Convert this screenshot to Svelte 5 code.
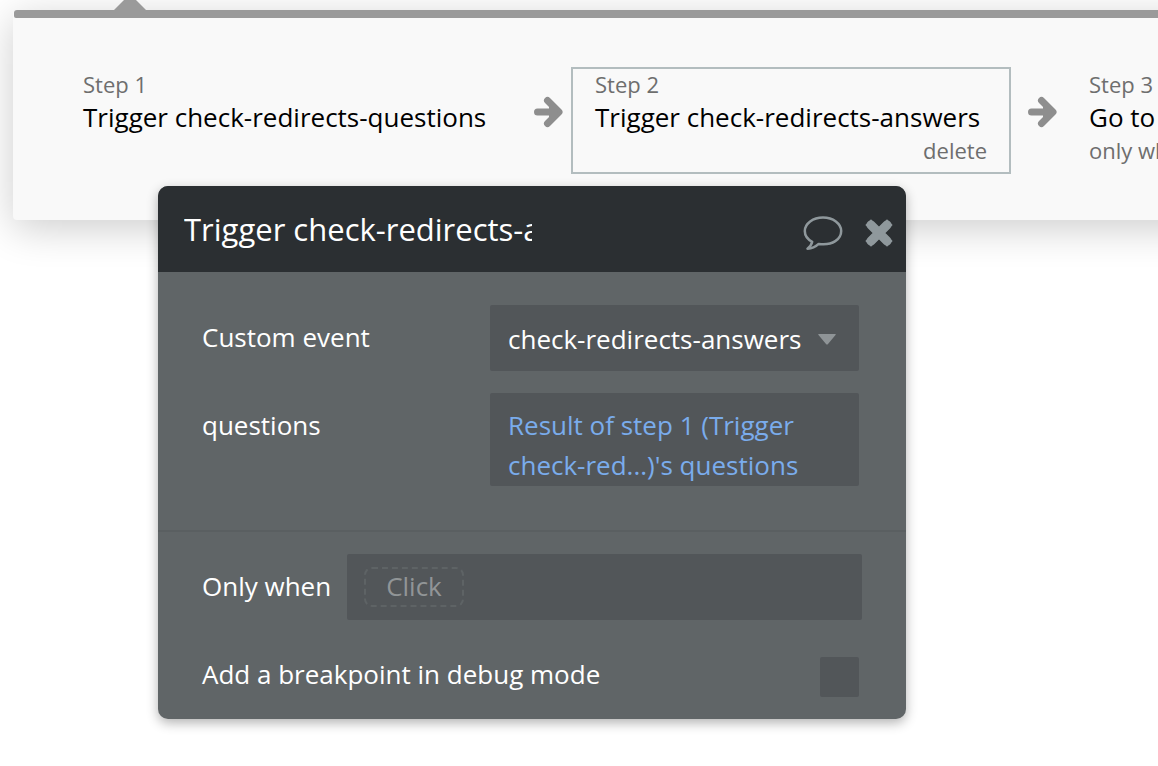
<script>
    let title = 'Trigger check-redirects-answers';
    let customEvent = 'check-redirects-answers';
    let breakpoint = false;

    const customEvents = ['check-redirects-answers', 'check-redirects-questions'];

    const steps = [
        { name: 'Trigger check-redirects-questions' },
        { name: 'Trigger check-redirects-answers', selected: true },
        { name: 'Go to page', condition: 'only when' }
    ];
</script>

<div class="page">
    <div class="workflow">
        <div class="pointer"></div>
        <div class="bar"></div>
        <div class="steps">
            {#each steps as step, i}
                {#if i > 0}
                    <svg class="arrow" width="29" height="32" viewBox="0 0 29 32">
                        <path d="M3.5 16H22M13.500 4.500L25 16L13.500 27.500" />
                        <path class="fill" d="M15 9L24 16L15 23Z" />
                    </svg>
                {/if}
                <div class="step" class:selected={step.selected}>
                    <span class="small">Step {i + 1}</span>
                    <span class="name">{step.name}</span>
                    {#if step.selected}
                        <button class="small delete">delete</button>
                    {/if}
                    {#if step.condition}
                        <span class="small">{step.condition}</span>
                    {/if}
                </div>
            {/each}
        </div>
    </div>

    <div class="editor">
        <div class="header">
            <input class="title" type="text" aria-label="Action name" bind:value={title} />
            <button class="icon" aria-label="Comment">
                <svg width="40" height="36" viewBox="0 0 40 36">
                    <path class="bubble" d="M20 2.500C10 2.500 1.800 8.500 1.800 16C1.800 20.500 4.500 24.300 9.200 26.800C8.600 29.800 7 31.800 4.500 33.700C9 33.500 12.700 31.700 15.700 28.900C30 30.800 38.200 24 38.200 16C38.200 8.500 30 2.500 20 2.500Z" />
                </svg>
            </button>
            <button class="icon" aria-label="Close">
                <svg width="28" height="28" viewBox="0 0 28 28">
                    <path class="cross" d="M6 6L22 22M22 6L6 22" />
                    <path class="corners" d="M6 6L22 22M22 6L6 22" />
                </svg>
            </button>
        </div>

        <div class="fields">
            <div class="row">
                <label for="custom-event">Custom event</label>
                <div class="dropdown">
                    <select id="custom-event" bind:value={customEvent}>
                        {#each customEvents as event}
                            <option value={event}>{event}</option>
                        {/each}
                    </select>
                    <svg class="caret" width="18" height="11" viewBox="0 0 18 11">
                        <path d="M1 0H17Q18.500 0 17.500 1L10 10Q9 11 8 10L0.500 1Q-0.500 0 1 0Z" />
                    </svg>
                </div>
            </div>
            <div class="row">
                <span class="label" id="questions">questions</span>
                <button class="expression" aria-labelledby="questions">Result of step 1 (Trigger check-red...)'s questions</button>
            </div>
        </div>

        <div class="options">
            <div class="row condition">
                <span class="label" id="only-when">Only when</span>
                <div class="composer">
                    <button class="click" aria-describedby="only-when">Click</button>
                </div>
            </div>
            <div class="row debug">
                <label for="breakpoint">Add a breakpoint in debug mode</label>
                <input id="breakpoint" type="checkbox" bind:checked={breakpoint} />
            </div>
        </div>
    </div>
</div>

<style>
    :global(body) {
        background: #fff;
    }
    .page {
        position: relative;
        min-height: 100vh;
        overflow: hidden;
        font-family: "Open Sans", "Noto Sans", sans-serif;
        font-size: 26px;
    }
    button, input, select {
        font-family: inherit;
        font-size: inherit;
        margin: 0;
        padding: 0;
        border: none;
        background: none;
        box-sizing: border-box;
    }
    button {
        cursor: pointer;
    }

    .workflow {
        position: relative;
        margin: 10px -60px 0 13px;
        background: #f9f9f9;
        border-radius: 4px;
        box-shadow: 0 8px 40px rgba(0, 0, 0, 0.2);
    }
    .pointer {
        position: absolute;
        left: 101px;
        top: -16px;
        border: 16px solid transparent;
        border-top-width: 0;
        border-bottom-color: #9a9a9a;
    }
    .bar {
        height: 8px;
        margin-left: 1px;
        background: #9a9a9a;
        border-radius: 3px 0 0 2px;
    }
    .steps {
        display: flex;
        align-items: flex-start;
        padding: 49px 0 46px 46px;
        overflow: hidden;
    }
    .step {
        display: flex;
        flex-direction: column;
        flex-shrink: 0;
        gap: 2px;
        min-width: 440px;
        min-height: 107px;
        box-sizing: border-box;
        padding: 0 22px;
        border: 2px solid transparent;
        line-height: 31px;
        white-space: nowrap;
        color: #000;
    }
    .step:first-child {
        min-width: 458px;
    }
    .step.selected {
        border-color: #b3bdbf;
    }
    .small {
        font-size: 22px;
        line-height: 31px;
        color: #6e6e6e;
    }
    .delete {
        align-self: flex-end;
    }
    .arrow {
        flex-shrink: 0;
        margin: 29px 8px 0 17px;
        fill: none;
        stroke: #8e8e8e;
        stroke-width: 7;
        stroke-linecap: round;
        stroke-linejoin: round;
    }
    .arrow .fill {
        fill: #8e8e8e;
        stroke: none;
    }

    .editor {
        position: absolute;
        left: 158px;
        top: 186px;
        width: 748px;
        border-radius: 10px;
        background: #606567;
        color: #fff;
        box-shadow: 0 4px 12px rgba(0, 0, 0, 0.3);
    }
    .header {
        display: flex;
        align-items: center;
        height: 86px;
        padding: 0 13px 0 26px;
        background: #2b2f32;
        border-radius: 10px 10px 0 0;
    }
    .title {
        width: 348px;
        height: 48px;
        margin-right: auto;
        font-size: 31px;
        color: #fff;
    }
    .icon {
        display: flex;
        margin: 8px 0 0 22px;
    }
    .bubble {
        fill: none;
        stroke: #8f989c;
        stroke-width: 2.5;
        stroke-linejoin: round;
    }
    .cross {
        stroke: #8f989c;
        stroke-width: 8;
        stroke-linecap: square;
    }
    .corners {
        stroke: #8f989c;
        stroke-width: 9;
        stroke-linecap: round;
    }

    .fields {
        display: flex;
        flex-direction: column;
        gap: 22px;
        padding: 33px 47px 44px 44px;
    }
    .row {
        display: flex;
        justify-content: space-between;
    }
    label, .label {
        line-height: 64px;
    }
    .dropdown {
        position: relative;
        width: 369px;
    }
    select {
        appearance: none;
        width: 100%;
        height: 66px;
        padding: 1px 50px 0 18px;
        background: #525659;
        border-radius: 2px;
        color: #fff;
    }
    .caret {
        position: absolute;
        right: 23px;
        top: 29px;
        fill: #8f9497;
        pointer-events: none;
    }
    .expression {
        width: 369px;
        padding: 12px 18px 1px;
        background: #525659;
        border-radius: 2px;
        color: #7aacec;
        line-height: 40px;
        text-align: left;
    }

    .options {
        padding: 22px 44px 22px;
        border-top: 2px solid #5a5f61;
    }
    .condition {
        gap: 16px;
    }
    .composer {
        flex: 1;
        display: flex;
        align-items: center;
        height: 66px;
        padding-left: 17px;
        background: #525659;
        border-radius: 2px;
    }
    .click {
        height: 40px;
        padding: 0 20px 2px;
        border: 2px dashed #5e6365;
        border-radius: 8px;
        color: #919597;
        line-height: 34px;
    }
    .debug {
        align-items: flex-end;
        margin-top: 37px;
        padding-right: 3px;
    }
    .debug label {
        line-height: 34px;
        align-self: flex-start;
    }
    input[type="checkbox"] {
        appearance: none;
        width: 39px;
        height: 40px;
        background: #525659;
        border-radius: 2px;
    }
    input[type="checkbox"]:checked {
        background: #7aacec;
    }
</style>
